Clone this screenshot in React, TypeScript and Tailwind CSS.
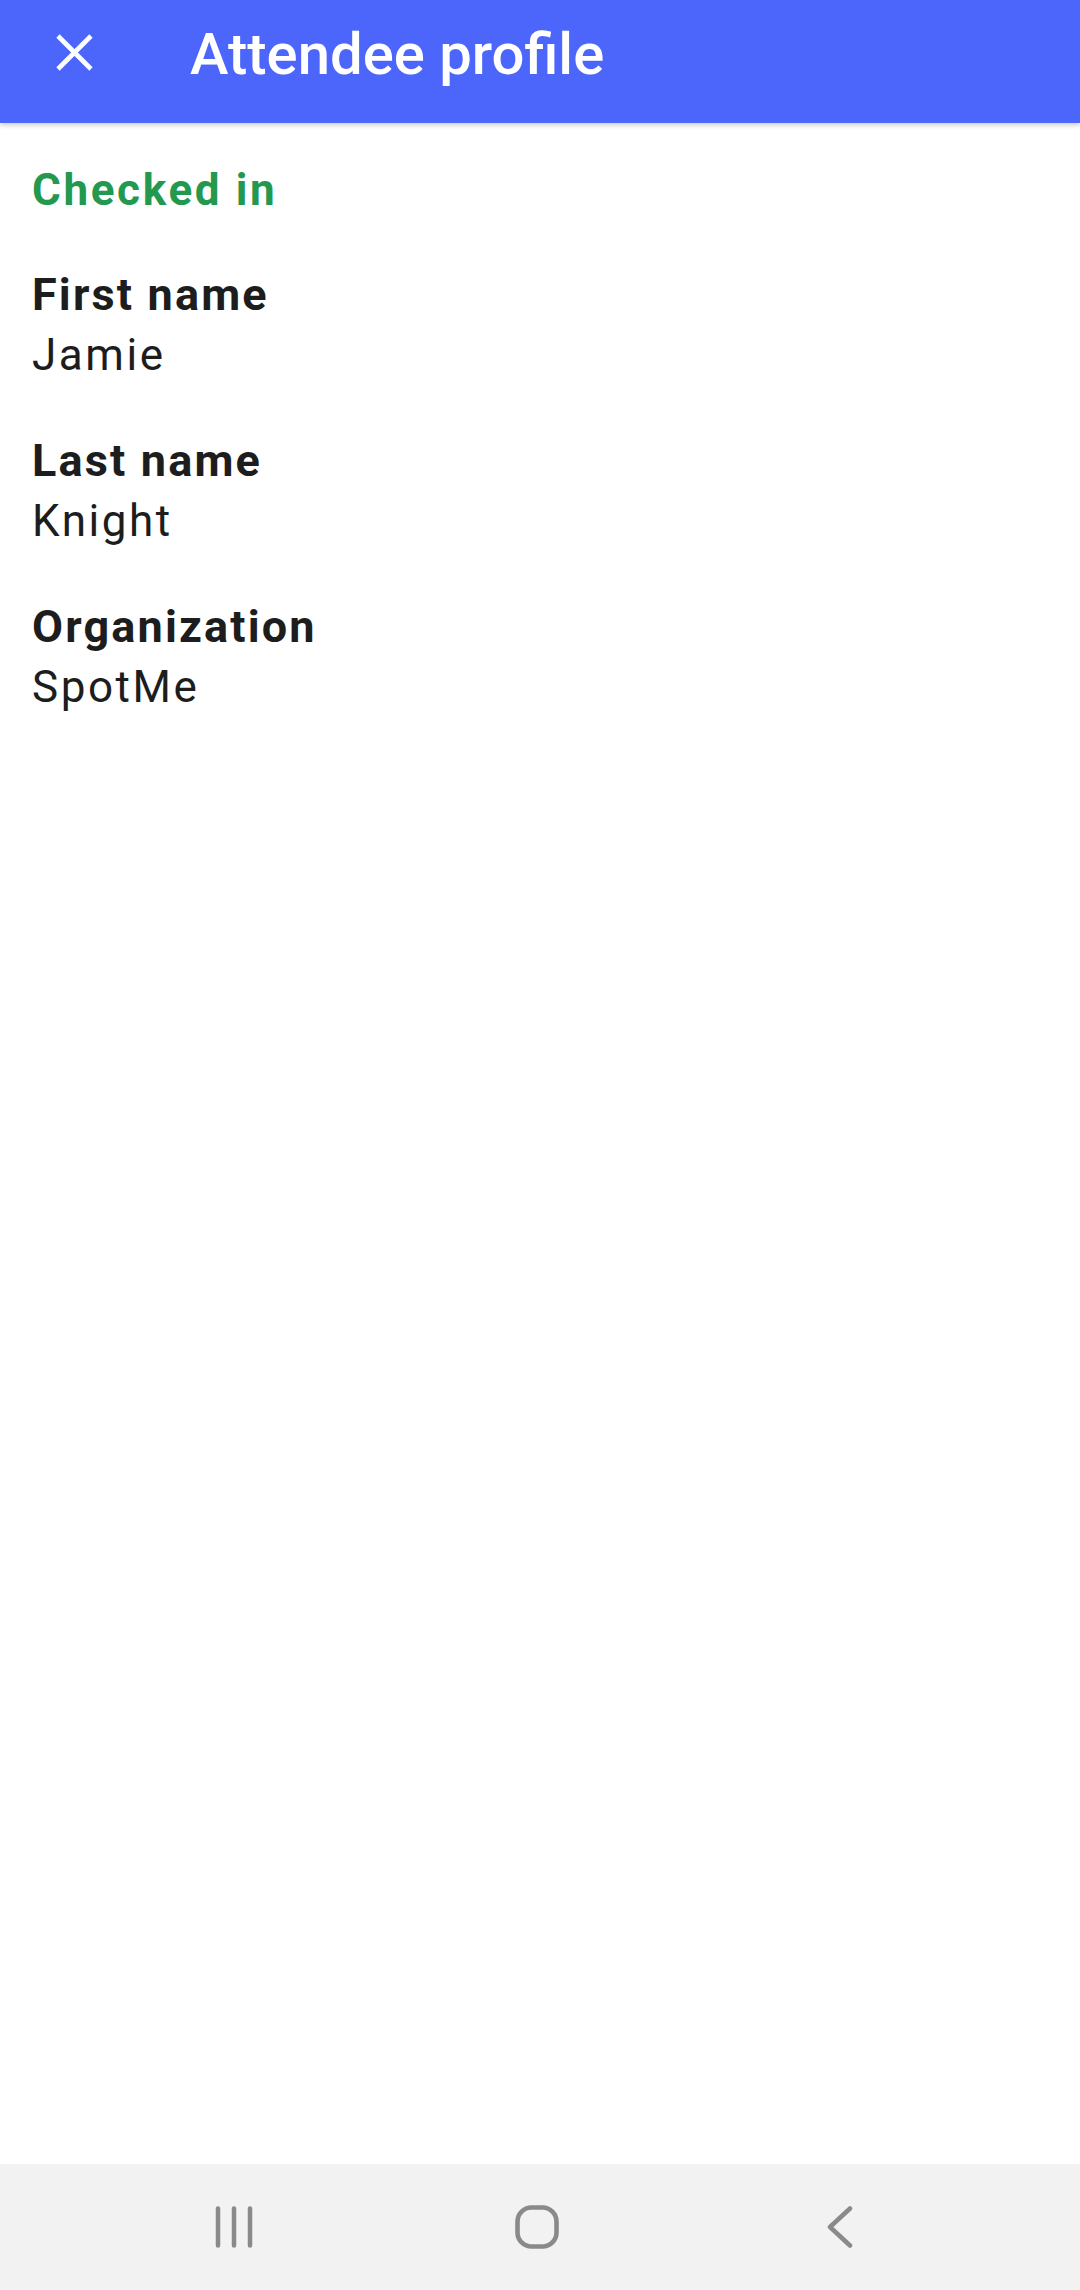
import React from "react";

function Field({ label, value }: { label: string; value: string }) {
  return (
    <div className="flex flex-col">
      <div className="text-[45px] leading-[60px] font-bold text-[#1d1d1d] tracking-[0.048em]">{label}</div>
      <div className="text-[44px] leading-[60px] font-normal text-[#1d1d1d] tracking-[0.058em]">{value}</div>
    </div>
  );
}

export default function App() {
  return (
    <div className="w-[1080px] h-[2290px] flex flex-col bg-white font-[Roboto,sans-serif] overflow-hidden">
      <header className="relative z-10 h-[123px] shrink-0 flex items-start bg-[#4c66fb] shadow-[0_2px_5px_rgba(0,0,0,0.22)]">
        <svg className="mt-[34px] ml-[56px]" width="37" height="37" viewBox="0 0 37 37" fill="none">
          <path d="M2 2L35 35M35 2L2 35" stroke="white" strokeWidth="4.6" strokeLinecap="butt" />
        </svg>
        <h1 className="mt-[25px] ml-[97px] text-[58px] leading-[58px] font-medium text-white tracking-normal">
          Attendee profile
        </h1>
      </header>
      <main className="flex-1 flex flex-col pl-[32px] pt-[37px]">
        <div className="text-[44px] leading-[60px] font-bold text-[#22994f] tracking-[0.06em]">Checked in</div>
        <div className="mt-[45px] flex flex-col gap-[46px]">
          <Field label="First name" value="Jamie" />
          <Field label="Last name" value="Knight" />
          <Field label="Organization" value="SpotMe" />
        </div>
      </main>
      <nav className="h-[126px] shrink-0 bg-[#f2f2f2] flex items-center pl-[204px]">
        <div className="w-[60px] flex justify-center">
          <svg width="40" height="42" viewBox="0 0 40 42" fill="none">
            <path d="M4 2.5V39.5M20 2.5V39.5M36 2.5V39.5" stroke="#8a8a8a" strokeWidth="4.5" strokeLinecap="round" />
          </svg>
        </div>
        <div className="ml-[243px] w-[60px] flex justify-center">
          <svg width="44" height="44" viewBox="0 0 44 44" fill="none">
            <rect x="2.5" y="2.5" width="39" height="39" rx="14" stroke="#8a8a8a" strokeWidth="4.6" />
          </svg>
        </div>
        <div className="ml-[243px] w-[60px] flex justify-center">
          <svg width="28" height="42" viewBox="0 0 28 42" fill="none">
            <path d="M24 2.5L4 21L24 39.5" stroke="#8a8a8a" strokeWidth="4.5" strokeLinecap="round" strokeLinejoin="round" />
          </svg>
        </div>
      </nav>
    </div>
  );
}
